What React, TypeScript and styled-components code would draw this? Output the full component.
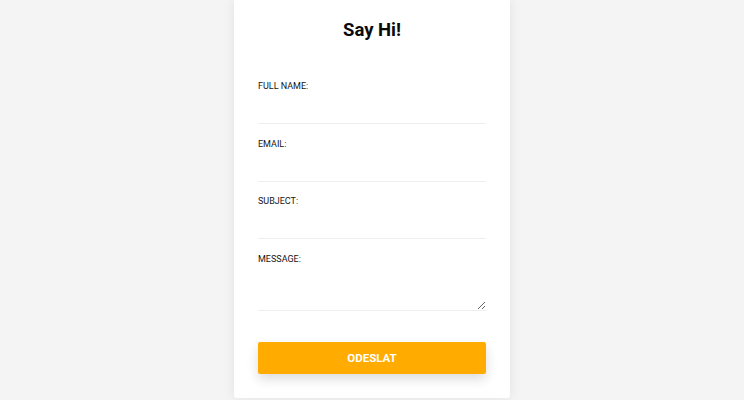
import React from 'react';
import styled, { createGlobalStyle } from 'styled-components';

const GlobalStyle = createGlobalStyle`
  html, body {
    margin: 0;
    padding: 0;
    background: #f4f4f4;
    font-family: Roboto, "Liberation Sans", sans-serif;
  }
`;

const Page = styled.div`
  display: flex;
  justify-content: center;
  height: 400px;
  overflow: hidden;
`;

const Card = styled.form`
  width: 276px;
  box-sizing: border-box;
  background: #fff;
  padding: 18px 24px 24px;
  box-shadow: 0 0 12px rgba(0, 0, 0, 0.08);
  border-radius: 0 0 3px 3px;
  display: flex;
  flex-direction: column;
  align-self: flex-start;
`;

const Title = styled.h1`
  margin: 0 0 39px;
  font-size: 18.5px;
  line-height: 24px;
  font-weight: 700;
  color: #0a0a0a;
  text-align: center;
`;

const Field = styled.div`
  display: flex;
  flex-direction: column;
  margin-bottom: 14.5px;
`;

const Label = styled.label`
  font-size: 9px;
  line-height: 11px;
  color: #151515;
  text-transform: uppercase;
`;

const Input = styled.input`
  border: none;
  border-bottom: 1px solid #eeeeee;
  height: 32px;
  box-sizing: border-box;
  outline: none;
  padding: 0;
  font: inherit;
`;

const TextArea = styled.textarea`
  border: none;
  border-bottom: 1px solid #eeeeee;
  height: 46px;
  box-sizing: border-box;
  outline: none;
  padding: 0;
  font: inherit;
  resize: vertical;
`;

const SubmitButton = styled.button`
  margin-top: 16.5px;
  height: 32px;
  border: none;
  border-radius: 2px;
  background: #ffab00;
  color: #fff;
  font-family: Roboto, "Liberation Sans", sans-serif;
  font-size: 11.5px;
  font-weight: 700;
  text-transform: uppercase;
  box-shadow: 0 5px 12px rgba(0, 0, 0, 0.14);
  cursor: pointer;
`;

const fields = ['Full name:', 'Email:', 'Subject:'];

const App: React.FC = () => (
  <>
    <GlobalStyle />
    <Page>
      <Card onSubmit={e => e.preventDefault()}>
        <Title>Say Hi!</Title>
        {fields.map(f => (
          <Field key={f}>
            <Label>{f}</Label>
            <Input type="text" />
          </Field>
        ))}
        <Field>
          <Label>Message:</Label>
          <TextArea />
        </Field>
        <SubmitButton type="submit">Odeslat</SubmitButton>
      </Card>
    </Page>
  </>
);

export default App;
